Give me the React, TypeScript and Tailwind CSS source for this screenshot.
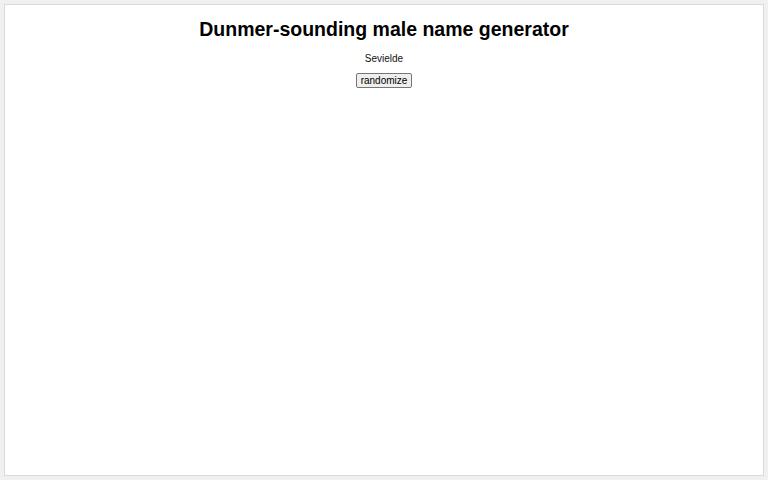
import React, { useState } from 'react';

const names = ['Sevielde', 'Dravynis', 'Galdreth', 'Ulvo', 'Nerevilas', 'Athyn'];

export default function App() {
    const [name, setName] = useState(names[0]);

    const randomize = () => {
        setName(names[Math.floor(Math.random() * names.length)]);
    };

    return (
        <div className="h-[480px] w-[768px] bg-[#f0f0f0] p-[4px] font-['Liberation_Sans',Arial,sans-serif]">
            <div className="flex h-full flex-col items-center border border-[#dadada] bg-white">
                <h1 className="mt-[12px] text-[19.5px] font-bold leading-[24px] text-black">
                    Dunmer-sounding male name generator
                </h1>
                <p className="mt-[11px] text-[10px] leading-[13px] text-[#111]">{name}</p>
                <button
                    onClick={randomize}
                    className="mt-[8px] h-[15px] rounded-[2px] border border-[#767676] bg-[#efefef] px-[4px] text-[10px] leading-[13px] text-black"
                >
                    randomize
                </button>
            </div>
        </div>
    );
}
